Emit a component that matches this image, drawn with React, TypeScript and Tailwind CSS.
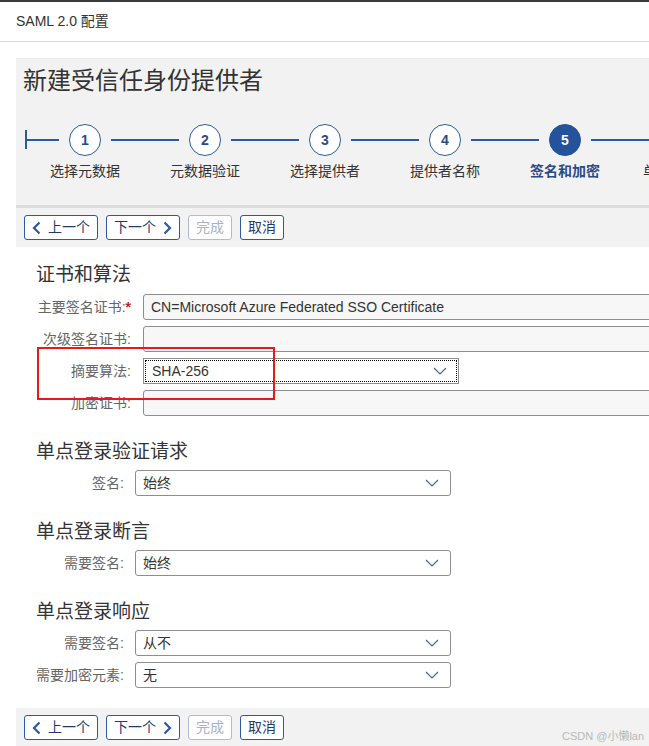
import React from "react";

const FONT = { fontFamily: '"Liberation Sans", "Noto Sans CJK SC", sans-serif' };

function ChevronLeft() {
  return (
    <svg width="9" height="14" viewBox="0 0 9 14" className="shrink-0">
      <path d="M7.5 1.5 L2 7 L7.5 12.5" fill="none" stroke="#2b5a9f" strokeWidth="2.2" />
    </svg>
  );
}
function ChevronRight() {
  return (
    <svg width="9" height="14" viewBox="0 0 9 14" className="shrink-0">
      <path d="M1.5 1.5 L7 7 L1.5 12.5" fill="none" stroke="#2b5a9f" strokeWidth="2.2" />
    </svg>
  );
}
function Caret() {
  return (
    <svg width="14" height="8" viewBox="0 0 14 8" className="shrink-0">
      <path d="M1 1 L7 7 L13 1" fill="none" stroke="#4a6497" strokeWidth="1.2" />
    </svg>
  );
}

function ButtonBar() {
  return (
    <div className="flex items-center gap-2 bg-[#f2f2f2] h-[39px] pl-2">
      <button className="h-[25px] w-[74px] flex items-center justify-center gap-[7px] border border-[#2b5a9f] rounded-[3px] bg-white text-[14px] text-[#1f3b6e]">
        <ChevronLeft />
        <span>上一个</span>
      </button>
      <button className="h-[25px] w-[74px] flex items-center justify-center gap-[7px] border border-[#2b5a9f] rounded-[3px] bg-white text-[14px] text-[#1f3b6e]">
        <span>下一个</span>
        <ChevronRight />
      </button>
      <button className="h-[25px] w-[44px] flex items-center justify-center border border-[#a9bcdc] rounded-[3px] bg-white text-[14px] text-[#a7b3c8]">
        完成
      </button>
      <button className="h-[25px] w-[44px] flex items-center justify-center border border-[#2b5a9f] rounded-[3px] bg-white text-[14px] text-[#1f3b6e]">
        取消
      </button>
    </div>
  );
}

const steps = ["选择元数据", "元数据验证", "选择提供者", "提供者名称", "签名和加密", "单点登录配置"];

function Stepper() {
  return (
    <div className="flex pl-[9px]">
      {steps.map((s, i) => {
        const active = i === 4;
        return (
          <div key={s} className="w-[120px] shrink-0 flex flex-col items-center">
            <div className="w-full flex items-center h-[32px]">
              <div className="flex-1 h-[1.5px] bg-[#2b5a9f] relative">
                {i === 0 && <div className="absolute left-0 top-[-9px] w-[1.5px] h-[19px] bg-[#2b5a9f]" />}
              </div>
              <div
                className={
                  active
                    ? "mx-[10px] w-[32px] h-[32px] rounded-full bg-[#24529b] border border-[#24529b] flex items-center justify-center text-white font-bold text-[14px]"
                    : "mx-[10px] w-[32px] h-[32px] rounded-full bg-white border-[1.5px] border-[#2b5a9f] flex items-center justify-center text-[#2b4a86] font-bold text-[14px]"
                }
              >
                {i + 1}
              </div>
              <div className="flex-1 h-[1.5px] bg-[#2b5a9f]" />
            </div>
            <div
              className={
                active
                  ? "mt-[5px] text-[14px] leading-[20px] whitespace-nowrap font-bold text-[#2a4a86]"
                  : "mt-[5px] text-[14px] leading-[20px] whitespace-nowrap text-[#333]"
              }
            >
              {s}
            </div>
          </div>
        );
      })}
    </div>
  );
}

function SectionTitle({ children, mt }: { children: React.ReactNode; mt: string }) {
  return <div className={`${mt} text-[19px] leading-[26px] text-[#333]`}>{children}</div>;
}

function Row1({ label, star, children }: { label: string; star?: boolean; children: React.ReactNode }) {
  return (
    <div className="flex items-center h-[26px]">
      <div className="w-[97px] shrink-0 text-right text-[14px] text-[#666] whitespace-nowrap pr-[2px]">
        {label}
        {star && <span className="text-[#c8201e] font-bold">*</span>}
      </div>
      <div className="ml-[10px]">{children}</div>
    </div>
  );
}

function Row2({ label, value }: { label: string; value: string }) {
  return (
    <div className="flex items-center h-[26px]">
      <div className="w-[90px] shrink-0 text-right text-[14px] text-[#666] whitespace-nowrap pr-[2px]">{label}</div>
      <div className="ml-[9px] w-[316px] h-[26px] border border-[#8e8e8e] rounded-[3px] bg-white flex items-center justify-between pl-[7px] pr-[11px] text-[14px] text-[#333]">
        <span>{value}</span>
        <Caret />
      </div>
    </div>
  );
}

export default function App() {
  return (
    <div className="relative w-[649px] h-[746px] overflow-hidden bg-white border-t-2 border-[#3a3a3a]" style={FONT}>
      <div className="h-[40px] flex items-center pl-4 text-[14px] text-[#333] border-b border-[#d9d9d9]">SAML 2.0 配置</div>
      <div className="ml-4 mt-4">
        <div className="bg-[#f2f2f2] border-b-[3px] border-[#dcdcdc] pt-[6px] pb-[24px] border-t border-t-[#ececec]">
          <div className="pl-[7px] text-[24px] leading-[32px] text-[#333]">新建受信任身份提供者</div>
          <div className="mt-[27px]">
            <Stepper />
          </div>
        </div>
        <ButtonBar />
        <div className="pl-5">
          <SectionTitle mt="mt-[15px]">证书和算法</SectionTitle>
          <div className="mt-[6px] flex flex-col gap-[6px]">
            <Row1 label="主要签名证书:" star>
              <div className="w-[520px] h-[26px] border border-[#8e8e8e] rounded-[3px] bg-[#f7f7f7] flex items-center pl-[7px] text-[14px] text-[#333] whitespace-nowrap">
                CN=Microsoft Azure Federated SSO Certificate
              </div>
            </Row1>
            <Row1 label="次级签名证书:">
              <div className="w-[520px] h-[26px] border border-[#8e8e8e] rounded-[3px] bg-[#f7f7f7]" />
            </Row1>
            <Row1 label="摘要算法:">
              <div className="w-[316px] h-[26px] border border-[#8e8e8e] bg-white p-[1px]">
                <div className="h-full border border-dotted border-black flex items-center justify-between pl-[6px] pr-[9px] text-[14px] text-[#333]">
                  <span>SHA-256</span>
                  <Caret />
                </div>
              </div>
            </Row1>
            <Row1 label="加密证书:">
              <div className="w-[520px] h-[26px] border border-[#8e8e8e] rounded-[3px] bg-[#f7f7f7]" />
            </Row1>
          </div>

          <SectionTitle mt="mt-[23px]">单点登录验证请求</SectionTitle>
          <div className="mt-[5px]">
            <Row2 label="签名:" value="始终" />
          </div>

          <SectionTitle mt="mt-[23px]">单点登录断言</SectionTitle>
          <div className="mt-[5px]">
            <Row2 label="需要签名:" value="始终" />
          </div>

          <SectionTitle mt="mt-[23px]">单点登录响应</SectionTitle>
          <div className="mt-[5px] flex flex-col gap-[6px]">
            <Row2 label="需要签名:" value="从不" />
            <Row2 label="需要加密元素:" value="无" />
          </div>
        </div>
        <div className="mt-[20px]">
          <ButtonBar />
        </div>
      </div>

      <div className="absolute left-[37px] top-[345px] w-[238px] h-[53px] border-2 border-[#e8191b]" />
      <div className="absolute left-[562px] top-[726px] text-[11px] text-[#b8b8b8] whitespace-nowrap">CSDN @小懒lan</div>
    </div>
  );
}
